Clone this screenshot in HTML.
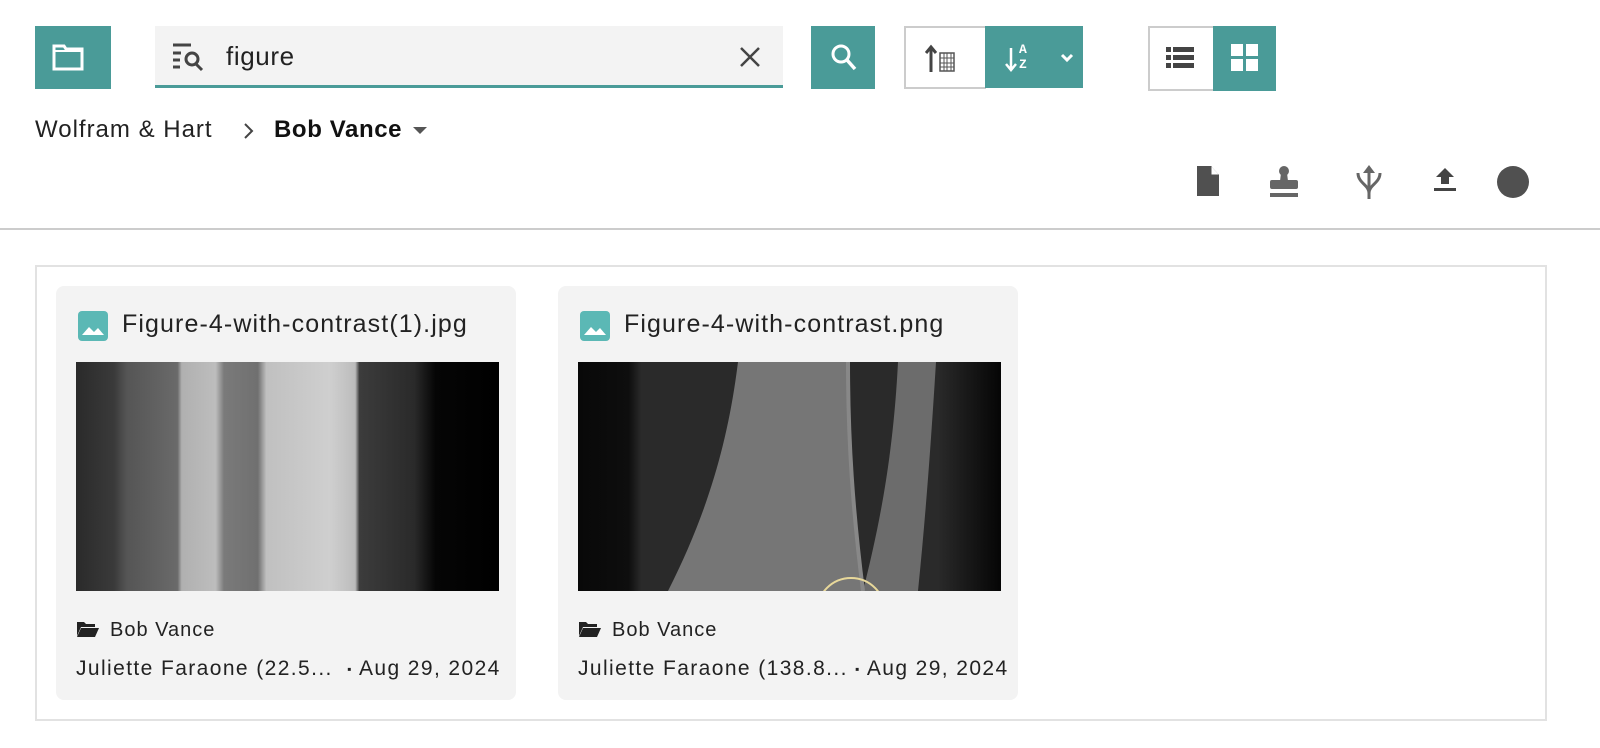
<!DOCTYPE html>
<html><head><meta charset="utf-8"><style>
*{box-sizing:border-box;margin:0;padding:0}
body{width:1600px;height:748px;background:#fff;font-family:"Liberation Sans",sans-serif;color:#222;position:relative;overflow:hidden}
.abs{position:absolute}
.teal{background:#4a9b98}
.card{position:absolute;top:286px;width:460px;height:414px;background:#f3f3f3;border-radius:8px}
.ttl{position:absolute;left:66px;top:24px;font-size:25px;letter-spacing:1.1px;color:#222;white-space:nowrap}
.ico{position:absolute;left:22px;top:25px;width:30px;height:30px;background:#5bb8b5;border-radius:4px}
.img{position:absolute;left:20px;top:76px;width:423px;height:229px}
.fold{position:absolute;left:20px;top:333px;font-size:20px;letter-spacing:1px;color:#222}
.meta{position:absolute;left:20px;top:371px;font-size:21px;letter-spacing:1.4px;color:#222;white-space:nowrap}
</style></head><body>
<div class="abs teal" style="left:35px;top:26px;width:76px;height:63px"></div>
<svg class="abs" style="left:52px;top:43px" width="32" height="28" viewBox="0 0 32 28"><path d="M2 3h10l2 3h16v20H2z" fill="none" stroke="#fff" stroke-width="3"/><path d="M2 8h28" stroke="#fff" stroke-width="2"/></svg>
<div class="abs" style="left:155px;top:26px;width:628px;height:62px;background:#f3f3f3;border-bottom:3px solid #4a9b98"></div>
<svg class="abs" style="left:171px;top:43px" width="38" height="30" viewBox="0 0 38 30"><path d="M2 2h18M2 10h8M2 17h7M2 24h7" stroke="#444" stroke-width="3"/><circle cx="21" cy="16" r="6" fill="none" stroke="#444" stroke-width="3"/><path d="M25 21l6 6" stroke="#444" stroke-width="3"/></svg>
<div class="abs" style="left:226px;top:41px;font-size:26px;letter-spacing:0.6px;color:#222">figure</div>
<svg class="abs" style="left:738px;top:45px" width="24" height="24"><path d="M3 3l18 18M21 3L3 21" stroke="#444" stroke-width="2.5"/></svg>
<div class="abs teal" style="left:811px;top:26px;width:64px;height:63px"></div>
<svg class="abs" style="left:829px;top:42px" width="30" height="30"><circle cx="12" cy="12" r="8" fill="none" stroke="#fff" stroke-width="3"/><path d="M18 18l8 9" stroke="#fff" stroke-width="3.5"/></svg>
<div class="abs" style="left:904px;top:26px;width:82px;height:63px;border:2px solid #ccc;border-right:none"></div>
<svg class="abs" style="left:925px;top:44px" width="40" height="30"><path d="M6 28V4M1 9l5-6 5 6" stroke="#444" stroke-width="3" fill="none"/><rect x="15" y="9" width="14" height="18" fill="none" stroke="#555" stroke-width="1.5"/><path d="M15 14h14M15 19h14M15 23h14M19 9v18M22 9v18M26 9v18" stroke="#555" stroke-width="1"/></svg>
<div class="abs teal" style="left:985px;top:26px;width:98px;height:62px"></div>
<svg class="abs" style="left:1003px;top:44px" width="30" height="30"><path d="M8 4v22M3 20l5 6 5-6" stroke="#fff" stroke-width="2.5" fill="none"/></svg>
<div class="abs" style="left:1019px;top:42px;color:#fff;font-family:'Liberation Mono',monospace;font-size:13px;font-weight:bold;line-height:15px">A<br>Z</div>
<svg class="abs" style="left:1060px;top:53px" width="14" height="10"><path d="M2 2l5 5 5-5" stroke="#fff" stroke-width="3" fill="none"/></svg>
<div class="abs" style="left:1148px;top:26px;width:66px;height:65px;border:2px solid #ccc;border-right:none"></div>
<svg class="abs" style="left:1166px;top:46px" width="30" height="24"><rect x="0" y="1" width="5" height="5" fill="#444"/><rect x="7" y="1" width="21" height="5" fill="#444"/><rect x="0" y="9" width="5" height="5" fill="#444"/><rect x="7" y="9" width="21" height="5" fill="#444"/><rect x="0" y="17" width="5" height="5" fill="#444"/><rect x="7" y="17" width="21" height="5" fill="#444"/></svg>
<div class="abs teal" style="left:1213px;top:26px;width:63px;height:65px"></div>
<svg class="abs" style="left:1230px;top:43px" width="30" height="30"><rect x="1" y="1" width="12" height="12" fill="#fff"/><rect x="16" y="1" width="12" height="12" fill="#fff"/><rect x="1" y="16" width="12" height="12" fill="#fff"/><rect x="16" y="16" width="12" height="12" fill="#fff"/></svg>
<div class="abs" style="left:35px;top:116px;font-size:24px;letter-spacing:1px;color:#222;white-space:nowrap">Wolfram &amp; Hart</div>
<svg class="abs" style="left:242px;top:122px" width="14" height="18"><path d="M3 2l7 7-7 7" stroke="#444" stroke-width="2" fill="none"/></svg>
<div class="abs" style="left:274px;top:116px;font-size:24px;letter-spacing:0.6px;font-weight:bold;color:#111;white-space:nowrap">Bob Vance</div>
<svg class="abs" style="left:412px;top:126px" width="16" height="10"><path d="M1 1h14L8 8z" fill="#555"/></svg>
<svg class="abs" style="left:1196px;top:165px" width="26" height="32"><path d="M1 1h14l8 9v21H1z" fill="#505050"/><path d="M15 1v9h8" fill="#fff" stroke="#505050" stroke-width="1"/></svg>
<svg class="abs" style="left:1267px;top:165px" width="34" height="36"><circle cx="17" cy="6" r="5" fill="#666"/><path d="M14 8h6l1 8H13z" fill="#666"/><rect x="3" y="15" width="28" height="9" rx="2" fill="#666"/><rect x="3" y="28" width="28" height="4" fill="#666"/></svg>
<svg class="abs" style="left:1355px;top:163px" width="28" height="40"><path d="M14 36v-6c0-8-11-10-11-20M14 30c0-8 11-10 11-20M14 30V6" stroke="#666" stroke-width="3" fill="none"/><path d="M8 10l6-8 6 8z" fill="#666"/></svg>
<svg class="abs" style="left:1432px;top:166px" width="26" height="30"><path d="M13 2l9 9h-5v7H9v-7H4z" fill="#444"/><rect x="2" y="22" width="22" height="3" fill="#444"/></svg>
<div class="abs" style="left:1497px;top:166px;width:32px;height:32px;border-radius:50%;background:#505050"></div>
<div class="abs" style="left:0;top:228px;width:1600px;height:2px;background:#ccc"></div>
<div class="abs" style="left:35px;top:265px;width:1512px;height:456px;border:2px solid #e2e2e2"></div>

<div class="card" style="left:56px">
<div class="ico"><svg width="30" height="30"><path d="M4 24l7-8 5 5 4-4 6 7z" fill="#fff"/></svg></div>
<div class="ttl">Figure-4-with-contrast(1).jpg</div>
<svg class="img" viewBox="0 0 423 229" preserveAspectRatio="none"><defs>
<linearGradient id="a" x1="0" x2="1"><stop offset="0" stop-color="#2a2a2a"/><stop offset=".09" stop-color="#3a3a3a"/><stop offset=".12" stop-color="#555"/><stop offset=".24" stop-color="#6a6a6a"/><stop offset=".25" stop-color="#b0b0b0"/><stop offset=".33" stop-color="#bdbdbd"/><stop offset=".35" stop-color="#7a7a7a"/><stop offset=".43" stop-color="#707070"/><stop offset=".45" stop-color="#c0c0c0"/><stop offset=".6" stop-color="#cfcfcf"/><stop offset=".66" stop-color="#bcbcbc"/><stop offset=".67" stop-color="#3c3c3c"/><stop offset=".8" stop-color="#2a2a2a"/><stop offset=".85" stop-color="#050505"/><stop offset="1" stop-color="#000"/></linearGradient></defs>
<rect width="423" height="229" fill="url(#a)"/></svg>
<div class="fold"><svg width="26" height="18" style="vertical-align:-2px;margin-right:8px"><path d="M1 2h7l2 2h9v3H5L1 16z" fill="#222"/><path d="M5 8h18l-4 9H1z" fill="#222"/></svg>Bob Vance</div>
<div class="meta">Juliette Faraone (22.5...&nbsp;&nbsp;<span style="font-size:12px;vertical-align:2px">▪</span> Aug 29, 2024</div>
</div>

<div class="card" style="left:558px">
<div class="ico"><svg width="30" height="30"><path d="M4 24l7-8 5 5 4-4 6 7z" fill="#fff"/></svg></div>
<div class="ttl">Figure-4-with-contrast.png</div>
<svg class="img" viewBox="0 0 423 229" preserveAspectRatio="none"><defs>
<linearGradient id="b" x1="0" x2="1"><stop offset="0" stop-color="#080808"/><stop offset=".12" stop-color="#0e0e0e"/><stop offset=".15" stop-color="#2a2a2a"/><stop offset=".85" stop-color="#2a2a2a"/><stop offset="1" stop-color="#050505"/></linearGradient></defs>
<rect width="423" height="229" fill="url(#b)"/>
<path d="M160 0H270c0 80 5 150 15 229H90C130 150 150 80 160 0z" fill="#767676"/>
<path d="M320 0h38c-5 80-10 150-18 229h-55c15-60 30-130 35-229z" fill="#6c6c6c"/>
<path d="M270 0c0 80 5 150 15 229" stroke="#888" stroke-width="4" fill="none"/>
<circle cx="273" cy="250" r="34" fill="none" stroke="#e8d89a" stroke-width="2"/></svg>
<div class="fold"><svg width="26" height="18" style="vertical-align:-2px;margin-right:8px"><path d="M1 2h7l2 2h9v3H5L1 16z" fill="#222"/><path d="M5 8h18l-4 9H1z" fill="#222"/></svg>Bob Vance</div>
<div class="meta">Juliette Faraone (138.8... <span style="font-size:12px;vertical-align:2px">▪</span> Aug 29, 2024</div>
</div>
</body></html>
